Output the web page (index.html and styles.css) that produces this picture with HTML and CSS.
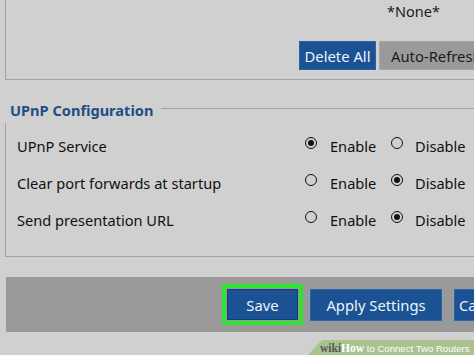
FILE: index.html
```html
<!DOCTYPE html>
<html>
<head>
<meta charset="utf-8">
<link rel="stylesheet" href="styles.css">
</head>
<body>
<div class="page">
  <div class="top-box">
    <div class="none">*None*</div>
    <div class="top-buttons">
      <button class="btn btn-blue btn-del">Delete All</button>
      <button class="btn btn-grey btn-auto">Auto-Refresh</button>
    </div>
  </div>

  <div class="section">
    <div class="legend-row">
      <span class="legend">UPnP Configuration</span>
      <span class="legend-line"></span>
    </div>
    <div class="section-body">
      <div class="row">
        <span class="label">UPnP Service</span>
        <span class="opt opt1"><span class="radio checked"></span>Enable</span>
        <span class="opt opt2"><span class="radio"></span>Disable</span>
      </div>
      <div class="row">
        <span class="label">Clear port forwards at startup</span>
        <span class="opt opt1"><span class="radio"></span>Enable</span>
        <span class="opt opt2"><span class="radio checked"></span>Disable</span>
      </div>
      <div class="row">
        <span class="label">Send presentation URL</span>
        <span class="opt opt1"><span class="radio"></span>Enable</span>
        <span class="opt opt2"><span class="radio checked"></span>Disable</span>
      </div>
    </div>
  </div>

  <div class="footer">
    <button class="btn btn-blue btn-save">Save</button>
    <button class="btn btn-blue btn-apply">Apply Settings</button>
    <button class="btn btn-blue btn-cancel">Cancel</button>
  </div>
</div>
<div class="watermark"><span class="wm-wiki">wiki</span><span class="wm-how">How</span><span class="wm-rest"> to Connect Two Routers</span></div>
</body>
</html>
```

FILE: styles.css
```css
html, body {
  margin: 0;
  padding: 0;
  width: 474px;
  height: 355px;
  overflow: hidden;
  background: #d0d0d0;
}
body {
  position: relative;
  font-family: "Noto Sans", "Open Sans", sans-serif;
  color: #1a1a1a;
}
.page {
  width: 600px;
}
.top-box {
  margin-left: 5px;
  height: 80px;
  box-sizing: border-box;
  border-left: 1px solid #a2a2a2;
  border-bottom: 1px solid #a2a2a2;
}
.none {
  padding-left: 381px;
  height: 22px;
  line-height: 22px;
  font-size: 14.5px;
}
.top-buttons {
  display: flex;
  gap: 3px;
  padding-left: 293px;
  margin-top: 19px;
}
.btn {
  font-family: "Noto Sans", "Open Sans", sans-serif;
  font-size: 14.8px;
  border: none;
  margin: 0;
  padding: 0;
  box-sizing: border-box;
  display: flex;
  align-items: center;
  justify-content: center;
}
.btn-blue {
  background: #1a5294;
  color: #eef3fa;
  border: 1px solid #2a64a8;
}
.btn-grey {
  background: #9a9a9a;
  color: #1a1a1a;
  border: 1px solid #a6a6a6;
}
.btn-del {
  width: 77px;
  height: 29px;
}
.btn-auto {
  width: 112px;
  height: 29px;
  justify-content: flex-start;
  padding-left: 11px;
}
.section {
  margin-top: 19px;
}
.legend-row {
  display: flex;
  align-items: center;
  height: 22px;
}
.legend {
  padding-left: 10px;
  padding-right: 8px;
  font-weight: bold;
  font-size: 14.6px;
  color: #1f4c86;
  line-height: 22px;
}
.legend-line {
  flex: 1;
  border-top: 1px solid #a2a2a2;
  margin-top: -3px;
}
.section-body {
  margin-left: 5px;
  border-left: 1px solid #a2a2a2;
  border-bottom: 1px solid #a2a2a2;
  padding: 4px 0 18px 11px;
  margin-top: 2px;
}
.row {
  display: flex;
  align-items: center;
  height: 37px;
  font-size: 14.6px;
  color: #111;
}
.label {
  width: 288px;
}
.opt {
  display: flex;
  align-items: center;
}
.opt1 {
  width: 86px;
}
.radio {
  width: 12px;
  height: 12px;
  box-sizing: border-box;
  border: 1.7px solid #111;
  border-radius: 50%;
  margin-right: 13px;
  margin-top: -6px;
  display: flex;
  align-items: center;
  justify-content: center;
}
.radio.checked::after {
  content: "";
  width: 6px;
  height: 6px;
  border-radius: 50%;
  background: #111;
}
.opt2 .radio {
  margin-right: 12px;
}
.footer {
  margin-top: 20px;
  margin-left: 6px;
  height: 55px;
  background: #999999;
  display: flex;
  align-items: center;
  gap: 12px;
  padding-left: 221px;
}
.btn-save {
  width: 71px;
  height: 31px;
  outline: 4px solid #2ee42e;
  outline-offset: 1px;
  border-color: #0f3e78;
}
.btn-apply {
  width: 132px;
  height: 32px;
}
.btn-cancel {
  width: 80px;
  height: 32px;
  justify-content: flex-start;
  padding-left: 4px;
}
.watermark {
  position: absolute;
  right: 0;
  bottom: 0;
  height: 15px;
  width: 166px;
  padding-left: 12px;
  background: #a9c28e;
  clip-path: polygon(14px 0, 100% 0, 100% 100%, 0 100%);
  font-family: "Liberation Sans", Arial, sans-serif;
  font-size: 11px;
  font-weight: bold;
  line-height: 16px;
  color: #fff;
  white-space: nowrap;
  box-sizing: border-box;
}
.wm-wiki {
  font-family: "Liberation Serif", serif;
  color: #555;
  font-size: 11.5px;
}
.wm-how {
  font-family: "Liberation Serif", serif;
  font-size: 11.5px;
}
.wm-rest {
  font-weight: normal;
  font-size: 9.6px;
}
```
